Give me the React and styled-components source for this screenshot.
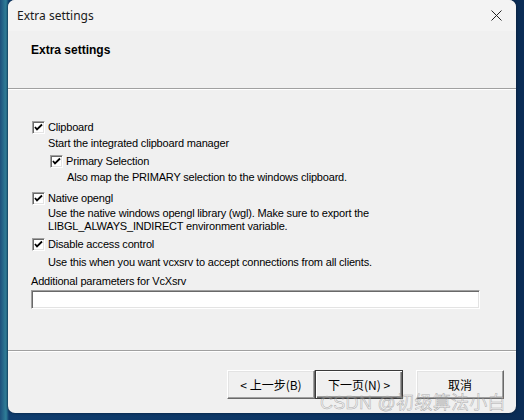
import React from "react";
import styled, { createGlobalStyle } from "styled-components";

const GlobalStyle = createGlobalStyle`
  html, body {
    margin: 0;
    padding: 0;
    width: 524px;
    height: 420px;
    overflow: hidden;
  }
  body {
    background: linear-gradient(90deg, #1d4f7c 0px, #2f7f98 6px, #0f3d6e 9px, #0c3563 60%, #0a2c55 100%);
    font-family: "Liberation Sans", Arial, sans-serif;
  }
`;

const Desktop = styled.div`
  position: relative;
  width: 524px;
  height: 420px;
`;

const Window = styled.div`
  margin-left: 8px;
  width: 508px;
  height: 413px;
  background: #f0f0f0;
  border-radius: 7px;
  overflow: hidden;
  display: flex;
  flex-direction: column;
  box-shadow: 0 0 3px rgba(0, 0, 0, 0.5);
`;

const TitleBar = styled.div`
  height: 31px;
  flex: none;
  background: #f3f3f3;
  display: flex;
  align-items: center;
  justify-content: space-between;
  padding: 0 9px;
  font-family: "Noto Sans", "Open Sans", sans-serif;
  font-size: 12px;
  color: #1a1a1a;
`;

const CloseIcon = styled.svg`
  width: 11px;
  height: 11px;
  margin-right: 5px;
`;

const Header = styled.div`
  height: 58px;
  flex: none;
  box-sizing: border-box;
  padding: 12px 0 0 23px;
  border-bottom: 1px solid #a0a0a0;
  box-shadow: 0 1px 0 #ffffff;
  font-family: "Liberation Sans", Arial, sans-serif;
  font-weight: bold;
  font-size: 12px;
  color: #000;
`;

const Body = styled.div`
  flex: 1;
  box-sizing: border-box;
  padding: 32px 24px 0 24px;
  display: flex;
  flex-direction: column;
  font-size: 11px;
  line-height: 13px;
  letter-spacing: -0.18px;
  color: #000;
  border-bottom: 1px solid #a0a0a0;
`;

const CheckRow = styled.label`
  display: flex;
  align-items: center;
  gap: 3px;
  margin-left: ${(p) => (p.$nested ? "18px" : "0")};
  margin-top: ${(p) => p.$top || 0}px;
`;

const Box = styled.span`
  width: 13px;
  height: 13px;
  box-sizing: border-box;
  background: #fff;
  border-top: 1px solid #a0a0a0;
  border-left: 1px solid #a0a0a0;
  border-right: 1px solid #ffffff;
  border-bottom: 1px solid #ffffff;
  box-shadow: inset 1px 1px 0 #696969, inset -1px -1px 0 #e3e3e3;
  display: flex;
  align-items: center;
  justify-content: center;
  flex: none;
`;

const Desc = styled.div`
  margin-left: ${(p) => p.$indent || 16}px;
  margin-top: ${(p) => p.$top || 0}px;
  white-space: nowrap;
`;

const FieldLabel = styled.div`
  margin-left: -1px;
  margin-top: 6px;
`;

const TextField = styled.div`
  margin-left: -1px;
  margin-top: 2px;
  width: 449px;
  height: 19px;
  box-sizing: border-box;
  background: #fff;
  border-top: 1px solid #a0a0a0;
  border-left: 1px solid #a0a0a0;
  border-right: 1px solid #ffffff;
  border-bottom: 1px solid #ffffff;
  box-shadow: inset 1px 1px 0 #696969, inset -1px -1px 0 #e3e3e3;
`;

const Footer = styled.div`
  height: 62px;
  flex: none;
  box-sizing: border-box;
  border-top: 1px solid #ffffff;
  display: flex;
  justify-content: flex-end;
  align-items: flex-start;
  padding: 18px 12px 0 0;
`;

const Button = styled.button`
  width: 88px;
  height: 29px;
  box-sizing: border-box;
  margin: 0;
  margin-left: ${(p) => p.$gap || 0}px;
  padding: 0;
  background: #f0f0f0;
  font-family: "Noto Sans CJK SC", "Liberation Sans", sans-serif;
  font-size: 12px;
  color: #000;
  border-top: 1px solid #ffffff;
  border-left: 1px solid #ffffff;
  border-right: 1px solid #696969;
  border-bottom: 1px solid #696969;
  box-shadow: inset -1px -1px 0 #a0a0a0, inset 1px 1px 0 #e3e3e3;
  ${(p) =>
    p.$default &&
    `
    border: 1px solid #3a3a3a;
    box-shadow: inset 1px 1px 0 #ffffff, inset -1px -1px 0 #696969, inset -2px -2px 0 #a0a0a0;
  `}
`;

const Watermark = styled.div`
  position: absolute;
  left: 320px;
  top: 388px;
  font-family: "Liberation Sans", "Noto Sans CJK SC", sans-serif;
  font-size: 18px;
  color: rgba(245, 245, 245, 0.2);
  -webkit-text-stroke: 0.5px rgba(130, 130, 130, 0.65);
  letter-spacing: 0.3px;
  white-space: nowrap;
`;

const Check = () => (
  <svg width="9" height="9" viewBox="0 0 9 9">
    <path d="M1 4 L3 6.5 L8 1.5" stroke="#000" strokeWidth="1.8" fill="none" />
  </svg>
);

const Option = ({ label, nested, top }) => (
  <CheckRow $nested={nested} $top={top}>
    <Box>
      <Check />
    </Box>
    {label}
  </CheckRow>
);

export default function App() {
  return (
    <Desktop>
      <GlobalStyle />
      <Window>
        <TitleBar>
          <span>Extra settings</span>
          <CloseIcon viewBox="0 0 11 11">
            <path d="M0.5 0.5 L10.5 10.5 M10.5 0.5 L0.5 10.5" stroke="#222" strokeWidth="1" />
          </CloseIcon>
        </TitleBar>
        <Header>Extra settings</Header>
        <Body>
          <Option label="Clipboard" />
          <Desc $top={3}>Start the integrated clipboard manager</Desc>
          <Option label="Primary Selection" nested top={5} />
          <Desc $indent={35} $top={3}>
            Also map the PRIMARY selection to the windows clipboard.
          </Desc>
          <Option label="Native opengl" top={8} />
          <Desc $top={2}>
            Use the native windows opengl library (wgl). Make sure to export the
          </Desc>
          <Desc>LIBGL_ALWAYS_INDIRECT environment variable.</Desc>
          <Option label="Disable access control" top={5} />
          <Desc $top={5}>Use this when you want vcxsrv to accept connections from all clients.</Desc>
          <FieldLabel>Additional parameters for VcXsrv</FieldLabel>
          <TextField />
        </Body>
        <Footer>
          <Button>&lt; 上一步(B)</Button>
          <Button $default>下一页(N) &gt;</Button>
          <Button $gap={13}>取消</Button>
        </Footer>
      </Window>
      <Watermark>CSDN @初级算法小白</Watermark>
    </Desktop>
  );
}
